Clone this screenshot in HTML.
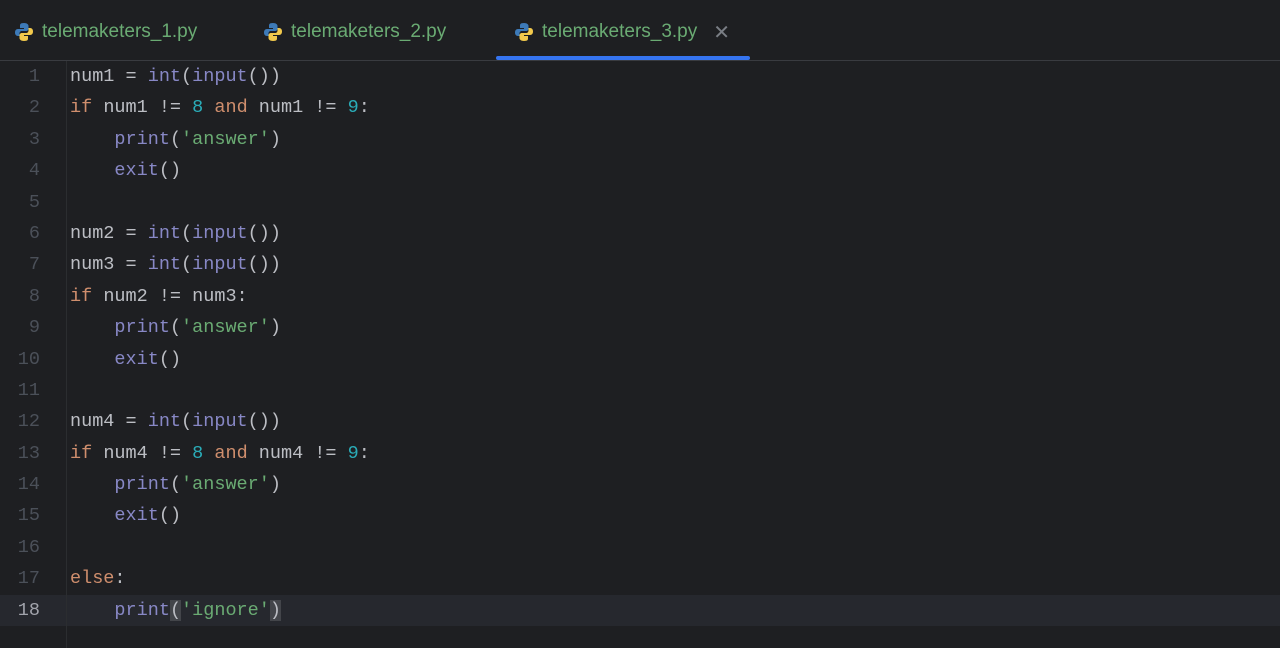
<!DOCTYPE html>
<html><head><meta charset="utf-8"><style>
html,body{margin:0;padding:0;width:1280px;height:648px;overflow:hidden;background:#1e1f22;}
.tabs{position:absolute;left:0;top:0;width:1280px;height:60px;background:#1e1f22;border-bottom:1px solid #393b40;font-family:"Liberation Sans",sans-serif;font-size:19px;color:#6aab73;}
.tab{position:absolute;top:0;height:64px;display:flex;align-items:center;}
.tab svg{margin-right:8px}
.act{position:absolute;left:496px;top:56px;width:254px;height:4px;background:#3574f0;border-radius:2px;}
.x{color:#7a7e85;margin-left:16px;font-size:20px}
.gutter{position:absolute;left:0;top:61px;width:66px;height:587px;border-right:1px solid #2b2d30;z-index:2;pointer-events:none}
.code{position:absolute;top:61px;left:0;width:1280px;font-family:"Liberation Mono",monospace;font-size:18.5px;}
.ln{height:31.4px;line-height:31.4px;position:relative;white-space:pre;color:#bcbec4;}
.ln .n{position:absolute;left:0;width:40px;text-align:right;color:#4b5059;}
.ln .t{position:absolute;left:70px;}
.cur{background:#26282e;}
.cur .n{color:#a1a3ab}
.k{color:#cf8e6d}.b{color:#8888c6}.d{color:#2aacb8}.s{color:#6aab73}
.br{background:#43454a}
</style></head><body>
<div class="tabs">
<div class="tab" style="left:14px"><svg width="20" height="20" viewBox="0 0 20 20"><path d="M10 1c-4 0-4 1.5-4 3v2h4v1H4c-2 0-3 1.5-3 3.5S2 14 4 14h1.5v-2.5c0-1.5 1-2.5 2.5-2.5h4c1.5 0 2.5-1 2.5-2.5V4c0-1.5-1.5-3-4.5-3z" fill="#3d7ab8"/><path d="M10 19c4 0 4-1.5 4-3v-2h-4v-1h6c2 0 3-1.5 3-3.5S18 6 16 6h-1.5v2.5c0 1.5-1 2.5-2.5 2.5H8c-1.5 0-2.5 1-2.5 2.5V16c0 1.5 1.5 3 4.5 3z" fill="#f2c94c"/></svg>telemaketers_1.py</div>
<div class="tab" style="left:263px"><svg width="20" height="20" viewBox="0 0 20 20"><path d="M10 1c-4 0-4 1.5-4 3v2h4v1H4c-2 0-3 1.5-3 3.5S2 14 4 14h1.5v-2.5c0-1.5 1-2.5 2.5-2.5h4c1.5 0 2.5-1 2.5-2.5V4c0-1.5-1.5-3-4.5-3z" fill="#3d7ab8"/><path d="M10 19c4 0 4-1.5 4-3v-2h-4v-1h6c2 0 3-1.5 3-3.5S18 6 16 6h-1.5v2.5c0 1.5-1 2.5-2.5 2.5H8c-1.5 0-2.5 1-2.5 2.5V16c0 1.5 1.5 3 4.5 3z" fill="#f2c94c"/></svg>telemaketers_2.py</div>
<div class="tab" style="left:514px"><svg width="20" height="20" viewBox="0 0 20 20"><path d="M10 1c-4 0-4 1.5-4 3v2h4v1H4c-2 0-3 1.5-3 3.5S2 14 4 14h1.5v-2.5c0-1.5 1-2.5 2.5-2.5h4c1.5 0 2.5-1 2.5-2.5V4c0-1.5-1.5-3-4.5-3z" fill="#3d7ab8"/><path d="M10 19c4 0 4-1.5 4-3v-2h-4v-1h6c2 0 3-1.5 3-3.5S18 6 16 6h-1.5v2.5c0 1.5-1 2.5-2.5 2.5H8c-1.5 0-2.5 1-2.5 2.5V16c0 1.5 1.5 3 4.5 3z" fill="#f2c94c"/></svg>telemaketers_3.py<span class="x">✕</span></div>
<div class="act"></div>
</div>
<div class="gutter"></div>
<div class="code">
<div class="ln"><span class="n">1</span><span class="t">num1 = <span class="b">int</span>(<span class="b">input</span>())</span></div>
<div class="ln"><span class="n">2</span><span class="t"><span class="k">if</span> num1 != <span class="d">8</span> <span class="k">and</span> num1 != <span class="d">9</span>:</span></div>
<div class="ln"><span class="n">3</span><span class="t">    <span class="b">print</span>(<span class="s">'answer'</span>)</span></div>
<div class="ln"><span class="n">4</span><span class="t">    <span class="b">exit</span>()</span></div>
<div class="ln"><span class="n">5</span><span class="t"></span></div>
<div class="ln"><span class="n">6</span><span class="t">num2 = <span class="b">int</span>(<span class="b">input</span>())</span></div>
<div class="ln"><span class="n">7</span><span class="t">num3 = <span class="b">int</span>(<span class="b">input</span>())</span></div>
<div class="ln"><span class="n">8</span><span class="t"><span class="k">if</span> num2 != num3:</span></div>
<div class="ln"><span class="n">9</span><span class="t">    <span class="b">print</span>(<span class="s">'answer'</span>)</span></div>
<div class="ln"><span class="n">10</span><span class="t">    <span class="b">exit</span>()</span></div>
<div class="ln"><span class="n">11</span><span class="t"></span></div>
<div class="ln"><span class="n">12</span><span class="t">num4 = <span class="b">int</span>(<span class="b">input</span>())</span></div>
<div class="ln"><span class="n">13</span><span class="t"><span class="k">if</span> num4 != <span class="d">8</span> <span class="k">and</span> num4 != <span class="d">9</span>:</span></div>
<div class="ln"><span class="n">14</span><span class="t">    <span class="b">print</span>(<span class="s">'answer'</span>)</span></div>
<div class="ln"><span class="n">15</span><span class="t">    <span class="b">exit</span>()</span></div>
<div class="ln"><span class="n">16</span><span class="t"></span></div>
<div class="ln"><span class="n">17</span><span class="t"><span class="k">else</span>:</span></div>
<div class="ln cur"><span class="n">18</span><span class="t">    <span class="b">print</span><span class="br">(</span><span class="s">'ignore'</span><span class="br">)</span></span></div>
</div>
</body></html>
